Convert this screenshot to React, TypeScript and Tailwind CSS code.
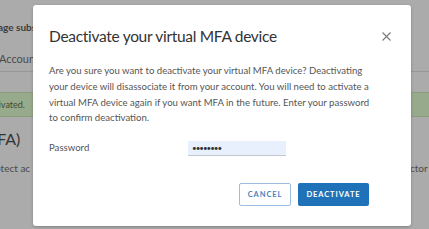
import React from "react";

const font = { fontFamily: "Lato, 'Noto Sans', sans-serif" };

function CloseIcon() {
    return (
        <svg width="9" height="9" viewBox="0 0 9 9" className="block">
            <path d="M0.5 0.5 L8.5 8.5 M8.5 0.5 L0.5 8.5" stroke="#7a7a7a" strokeWidth="1.1" fill="none" />
        </svg>
    );
}

export default function App() {
    return (
        <div
            className="relative w-[429px] h-[229px] overflow-hidden bg-[#ababab] text-[#3f3f3f]"
            style={font}
        >
            {/* page behind the dialog */}
            <div className="flex flex-col">
                <div className="h-[20px]" />
                <div className="ml-[-22px] text-[10px] font-bold leading-[14px] text-[#3c3c3c]">
                    Manage subscriptions
                </div>
                <div className="h-[18px]" />
                <div className="ml-[-1px] text-[11px] leading-[14px] text-[#4a4a4a]">
                    Account settings
                </div>
                <div className="h-[5px]" />
                <div className="h-px bg-[#979797]" />
                <div className="h-[20px]" />
                <div className="h-[25px] bg-[#98aa8c] border-y border-[#8a9e7e] flex items-center">
                    <span className="ml-[-25px] text-[9px] text-[#3d4a36]">Deactivated.</span>
                </div>
                <div className="h-[12px]" />
                <div className="ml-[-22px] text-[16px] leading-[20px] text-[#333]">(MFA)</div>
                <div className="h-[12px]" />
                <div className="flex justify-between text-[10px] leading-[14px] text-[#4a4a4a]">
                    <span className="ml-[-14px]">protect ac</span>
                    <span className="mr-[-6px]">ctor a</span>
                </div>
            </div>

            {/* dialog */}
            <div className="absolute left-[33px] top-[5px] w-[378px] h-[221px] rounded-[3px] bg-white shadow-[0_1px_3px_rgba(0,0,0,0.25)] flex flex-col px-[16px]">
                <div className="flex items-start justify-between pt-[20px]">
                    <h2 className="text-[15.5px] leading-[22px] tracking-[-0.3px] text-[#333] font-normal">
                        Deactivate your virtual MFA device
                    </h2>
                    <div className="mt-[7px] mr-[4px]">
                        <CloseIcon />
                    </div>
                </div>

                <p className="mt-[16px] text-[9.6px] leading-[15.8px] text-[#555]">
                    Are you sure you want to deactivate your virtual MFA device? Deactivating
                    <br />
                    your device will disassociate it from your account. You will need to activate a
                    <br />
                    virtual MFA device again if you want MFA in the future. Enter your password
                    <br />
                    to confirm deactivation.
                </p>

                <div className="mt-[15px] flex items-center">
                    <label className="w-[139px] text-[9.6px] text-[#555]">Password</label>
                    <div className="w-[98px] h-[15px] bg-[#e8f0fe] border-b-[1.5px] border-[#c4c9d0] flex items-center pl-[4px] text-[8px] tracking-[-1px] text-[#333]">
                        ••••••••
                    </div>
                </div>

                <div className="mt-[27px] flex justify-end gap-[7px] pr-[26px]">
                    <button className="w-[52px] h-[23px] rounded-[2px] border border-[#9dbde0] bg-white text-[7.5px] font-bold tracking-[0.9px] text-[#4b82bd]">
                        CANCEL
                    </button>
                    <button className="w-[71px] h-[23px] rounded-[2px] bg-[#2072b8] text-[7.5px] font-bold tracking-[0.9px] text-white">
                        DEACTIVATE
                    </button>
                </div>
            </div>
        </div>
    );
}
